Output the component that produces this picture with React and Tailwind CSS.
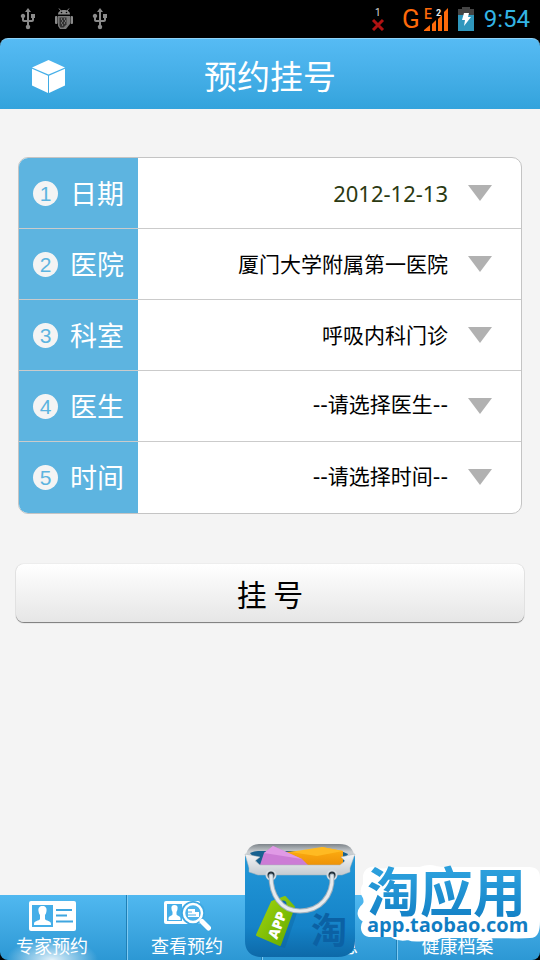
import React, { useState } from 'react';
import { MdUsb } from 'react-icons/md';

const fields = [
  {
    id: 'date',
    label: '日期',
    options: ['2012-12-13', '2012-12-14', '2012-12-15'],
    className: 'font-["Noto_Sans","Noto_Sans_CJK_SC",sans-serif] text-[22px] text-[#2b3a12]',
  },
  {
    id: 'hospital',
    label: '医院',
    options: ['厦门大学附属第一医院'],
    className: 'text-[21px] text-black',
  },
  {
    id: 'department',
    label: '科室',
    options: ['呼吸内科门诊'],
    className: 'text-[21px] text-black',
  },
  {
    id: 'doctor',
    label: '医生',
    options: ['--请选择医生--'],
    className: 'font-["DejaVu_Sans","Noto_Sans_CJK_SC",sans-serif] text-[21px] text-black',
  },
  {
    id: 'time',
    label: '时间',
    options: ['--请选择时间--'],
    className: 'font-["DejaVu_Sans","Noto_Sans_CJK_SC",sans-serif] text-[21px] text-black',
  },
];

function RobotIcon() {
  return (
    <svg width="20" height="22" viewBox="0 0 20 22" aria-hidden="true">
      <path d="M5 0.500L7 3M15 0.500L13 3" stroke="#8a8a8a" />
      <path d="M4 6.500C4 3.500 6.500 2 10 2s6 1.500 6 4.500z" fill="#8a8a8a" />
      <rect x="1" y="8" width="2.500" height="8" rx="1" fill="#8a8a8a" />
      <rect x="16.500" y="8" width="2.500" height="8" rx="1" fill="#8a8a8a" />
      <path d="M4 8h12v8l-4 5H6l-2-3z" fill="#777" />
      <path d="M5.500 9.500h7v7l-3 3h-3l-1-2z" fill="#333" />
      <path d="M7 11h1M10 11h1M8 13h1M11 13h1M7 15h1M10 15h1M8 17h1" stroke="#aaa" />
      <circle cx="7.500" cy="4.500" r="0.800" fill="#000" />
      <circle cx="12.500" cy="4.500" r="0.800" fill="#000" />
    </svg>
  );
}

function SignalIcon() {
  return (
    <svg width="25" height="24" viewBox="0 0 25 24" overflow="visible" aria-hidden="true">
      <path d="M0 24v-1l6-5v6zM8 24v-7l4-4v11zM14 24V12l4-4v16zM20 24V5l4-4v23z" fill="#ff6a0a" />
      <text x="0" y="12" fontSize="14" fontFamily="Roboto" fontWeight="500" fill="#ff6a0a">
        E
      </text>
      <text x="12" y="9" fontSize="9" fontFamily="Roboto" fontWeight="700" fill="#eee">
        2
      </text>
    </svg>
  );
}

function BatteryIcon() {
  return (
    <svg width="16" height="24" viewBox="0 0 16 24" aria-hidden="true">
      <path d="M4 0h8v2h4v6H0V2h4z" fill="#444" />
      <path d="M0 8h16v16H0z" fill="#2f97bd" />
      <path d="M6 6h5l-1 4h3l-7 9 1-6H4z" fill="#fff" />
    </svg>
  );
}

function StatusBar() {
  return (
    <div className="flex h-[38px] items-center justify-between bg-black pr-[10px] pl-4 font-[Roboto,sans-serif]">
      <div className="flex items-center gap-[14px] text-[#8a8a8a]">
        <MdUsb size={24} />
        <RobotIcon />
        <MdUsb size={24} />
      </div>
      <div className="flex items-center">
        <svg className="mr-[17px]" width="14" height="24" viewBox="0 0 14 24" aria-hidden="true">
          <text x="4" y="9" fontSize="10" fontFamily="Roboto" fill="#ddd">
            1
          </text>
          <path d="M2 13l10 10M12 13L2 23" stroke="#b01212" strokeWidth="3" />
        </svg>
        <span className="mr-1 text-[26px] leading-[38px] text-[#ff6a0a]">G</span>
        <SignalIcon />
        <span className="mr-[10px] ml-[9px]">
          <BatteryIcon />
        </span>
        <span className="text-2xl text-[#33b5e5]">9:54</span>
      </div>
    </div>
  );
}

function Header() {
  return (
    <header className="bg-black">
      <div className="grid h-[71px] grid-cols-[1fr_auto_1fr] items-center rounded-t-lg border-t border-[#8fd2f8] bg-linear-to-b from-[#56bbf4] to-[#33a3dc] px-8">
        <button type="button" aria-label="首页" className="w-[33px] pt-1">
          <svg width="33" height="33" viewBox="0 0 33 33">
            <path d="M16.500 0L33 7.500 16.500 14.500 0 7.500z" fill="#fff" />
            <path d="M0 8.700l16 7V33L0 25.500zM33 8.700l-16 7V33l16-7.500z" fill="#fff" />
          </svg>
        </button>
        <h1 className="pt-[2px] text-[33px] leading-[48px] text-white">预约挂号</h1>
      </div>
    </header>
  );
}

function FieldRow({ number, field, value, onChange }) {
  return (
    <div className="flex h-[71px] border-b border-[#cbcbcb] last:border-b-0">
      <label
        htmlFor={field.id}
        className="flex w-[119px] items-center gap-3 bg-[#5db4e0] pl-[14px] text-[27px] text-white"
      >
        <span className="flex size-[25px] shrink-0 items-center justify-center rounded-full bg-[#f4f4f4] font-['Liberation_Sans',sans-serif] text-[21px] leading-[25px] text-[#5db4e0]">
          {number}
        </span>
        {field.label}
      </label>
      <div className="relative flex-1">
        <select
          id={field.id}
          value={value}
          onChange={(e) => onChange(field.id, e.target.value)}
          className={`size-full appearance-none bg-transparent pr-[73px] [text-align-last:right] outline-none ${field.className}`}
        >
          {field.options.map((option) => (
            <option key={option}>{option}</option>
          ))}
        </select>
        <svg
          className="pointer-events-none absolute top-[27px] right-[29px]"
          width="24"
          height="16"
          viewBox="0 0 24 16"
          aria-hidden="true"
        >
          <path d="M0 0h24L12 16z" fill="#b1b1b1" />
        </svg>
      </div>
    </div>
  );
}

function CardIcon() {
  return (
    <svg width="47" height="30" viewBox="0 0 47 30" aria-hidden="true">
      <rect width="47" height="30" rx="2" fill="#fff" />
      <rect x="3" y="4" width="21" height="22" fill="#45aee8" />
      <path
        d="M13.500 5c3 0 4.500 2 4 5-.2 2-.8 3-1.500 4v4c1 2 6 1.500 6 5v1H5v-1c0-3.500 5-3 6-5v-4c-.7-1-1.300-2-1.500-4-.500-3 1-5 4-5z"
        fill="#fff"
      />
      <path d="M27 9h16M27 14.500h11M27 20.500h17" stroke="#3fa6e0" strokeWidth="2" />
    </svg>
  );
}

function SearchCardIcon() {
  return (
    <svg width="47" height="30" viewBox="0 0 47 30" aria-hidden="true">
      <rect width="36" height="23" rx="2" fill="#fff" />
      <rect x="3" y="3" width="15" height="17" fill="#45aee8" />
      <path
        d="M10.500 4c2.500 0 3.500 1.500 3 4-.2 1.500-.6 2-1 3v2.500c1 1.500 4 1.500 4 4V19h-12v-1.500c0-2.500 3-2.500 4-4V11c-.4-1-.8-1.500-1-3-.500-2.500.500-4 3-4z"
        fill="#fff"
      />
      <circle cx="29" cy="12" r="12" fill="#3ea8e2" />
      <circle cx="29" cy="12" r="9" fill="#4db3ea" stroke="#fff" strokeWidth="2.500" />
      <path d="M24 8h7v3h4v5H24z" fill="#fff" />
      <path d="M24 11h4M24 14h8" stroke="#45aee8" strokeWidth="1" />
      <path d="M38 20.500l6.500 6.500" stroke="#fff" strokeWidth="5" strokeLinecap="round" />
    </svg>
  );
}

const tabs = [
  { label: '专家预约', icon: <CardIcon /> },
  { label: '查看预约', icon: <SearchCardIcon /> },
  { label: '预约信息', icon: null },
  { label: '健康档案', icon: null },
];

function StoreLogo() {
  return (
    <svg
      className="pointer-events-none absolute right-0 bottom-0"
      width="300"
      height="122"
      viewBox="0 0 300 122"
      role="img"
      aria-label="淘应用 app.taobao.com"
    >
      <defs>
        <linearGradient id="bag" x1="0" y1="0" x2="0" y2="1">
          <stop offset="0" stopColor="#2398d8" />
          <stop offset="0.700" stopColor="#1583c8" />
          <stop offset="1" stopColor="#0d69a8" />
        </linearGradient>
        <linearGradient id="back" x1="0" y1="0" x2="0" y2="1">
          <stop offset="0" stopColor="#7d848a" />
          <stop offset="0.300" stopColor="#c9cdd0" />
          <stop offset="1" stopColor="#d5dade" />
        </linearGradient>
        <linearGradient id="rim" x1="0" y1="0" x2="0" y2="1">
          <stop offset="0" stopColor="#f4f5f6" />
          <stop offset="1" stopColor="#c4cbd1" />
        </linearGradient>
        <linearGradient id="tag" x1="0" y1="0" x2="1" y2="1">
          <stop offset="0" stopColor="#a5d70f" />
          <stop offset="1" stopColor="#5fa800" />
        </linearGradient>
        <linearGradient id="orange" x1="0" y1="0" x2="0" y2="1">
          <stop offset="0" stopColor="#ffb111" />
          <stop offset="1" stopColor="#ee9208" />
        </linearGradient>
        <linearGradient id="word" gradientUnits="userSpaceOnUse" x1="0" y1="34" x2="0" y2="98">
          <stop offset="0" stopColor="#2b9fdc" />
          <stop offset="1" stopColor="#0b76be" />
        </linearGradient>
      </defs>
      <path d="M5 20C7 10 11 6 21 6h78c10 0 14 4 16 14v12H5z" fill="url(#back)" />
      <path d="M10 15c2-1 5-2 8-2h83l7 3-6 12H20z" fill="#17618f" />
      <path d="M26 14l3-1h16l20 9h-7z" fill="#6d7a83" />
      <path d="M45 14l33-2 4-3 21 4v14H62z" fill="url(#orange)" />
      <path d="M50 14l32-5 21 4-26 5z" fill="#ffba22" />
      <path d="M20 27l4-12 9-7 29 13 6 6z" fill="#cc7cd5" />
      <path d="M24 15l9-7 29 13z" fill="#e09ae6" />
      <path d="M5 18h5l5 10h90l5-10h5v85c0 11-7 16-17 16H22c-10 0-17-5-17-16z" fill="url(#bag)" />
      <path
        d="M5 16l15 3-5 4 5 4h80l5-4-4-4 14-3-5 14v4l-8 3H18l-9-3v-4z"
        fill="url(#rim)"
        stroke="#aab4bb"
        strokeWidth="0.500"
      />
      <path d="M36 69l14-3 8 6-13 38-7-2z" fill="#0c5f99" opacity="0.350" />
      <circle cx="31" cy="37" r="5.500" fill="#d5dbe0" />
      <circle cx="31" cy="37" r="3.500" fill="#24313b" />
      <circle cx="92" cy="37" r="5.500" fill="#d5dbe0" />
      <circle cx="92" cy="37" r="3.500" fill="#24313b" />
      <path
        d="M32 64l13-5 9 10-14 38-23-10z"
        fill="url(#tag)"
        stroke="url(#tag)"
        strokeWidth="2"
        strokeLinejoin="round"
      />
      <circle cx="43" cy="66" r="3.500" fill="#0e6cae" />
      <path
        d="M31 38c0 18 9 35 29 35s33-15 32-35"
        fill="none"
        stroke="#9fb0bd"
        strokeWidth="5"
        strokeLinecap="round"
      />
      <path
        d="M31 38c0 18 9 35 29 35s33-15 32-35"
        fill="none"
        stroke="#e6eaed"
        strokeWidth="3"
        strokeLinecap="round"
      />
      <text
        transform="translate(37 102) rotate(-69)"
        fontSize="14"
        fontFamily="Open Sans"
        fontWeight="800"
        fill="#fff"
      >
        APP
      </text>
      <text x="71" y="106" fontSize="36" fontFamily="Noto Sans CJK SC" fontWeight="700" fill="#0b61a4">
        淘
      </text>
      <path
        d="M124 38c1-7 8-10 14-7 5 2 9-1 15-1h27c5-2 10-3 16-1 8 2 16 1 23 1h70c7 0 10 4 10 10v43c0 8-1 16-9 16-12 1-26 0-38 0-3 4-10 5-14 0h-37c-6 3-12 4-17 3-7 1-12 1-16-1-8 2-14-1-17-3h-22c-7-1-9-9-5-15-6-3-7-9-3-14 4-3 4-5 3-9-4-6-2-11 0-14z"
        fill="#fff"
        stroke="#fff"
        strokeWidth="2"
        strokeLinejoin="round"
      />
      <g fill="url(#word)">
        <text x="127" y="74" fontSize="53" fontFamily="Noto Sans CJK SC" fontWeight="700">
          淘应用
        </text>
        <text x="127" y="94" fontSize="20" fontFamily="Open Sans" fontWeight="700">
          app.taobao.com
        </text>
      </g>
    </svg>
  );
}

function TabBar() {
  return (
    <footer className="relative mt-auto bg-black">
      <nav className="grid h-[65px] grid-cols-4 overflow-hidden rounded-b-lg bg-linear-to-b from-[#50b8f0] to-[#2c98d4]">
        {tabs.map((tab, i) => (
          <div
            key={tab.label}
            className={
              i === 0
                ? 'bg-[radial-gradient(ellipse_46px_22px_at_52px_100%,#ffffffdd,#ffffff00)] pr-2'
                : 'pr-2'
            }
          >
            <a
              href="#"
              className={`flex h-full flex-col items-center pt-[6px] pr-[22px] text-white ${
                i < 3 ? 'border-r border-[#1f7fb5] shadow-[1px_0_#7fcbf3]' : ''
              }`}
            >
              <span className="h-8">{tab.icon}</span>
              <span className="text-lg leading-6 whitespace-nowrap">{tab.label}</span>
            </a>
          </div>
        ))}
      </nav>
      <StoreLogo />
    </footer>
  );
}

function App() {
  const [values, setValues] = useState({});

  const handleChange = (id, value) => {
    setValues({ ...values, [id]: value });
  };

  return (
    <div className="flex min-h-screen flex-col bg-[#f4f4f4] font-['Noto_Sans_CJK_SC',sans-serif]">
      <StatusBar />
      <Header />
      <form className="pt-12 pb-32" onSubmit={(e) => e.preventDefault()}>
        <div className="mx-[18px] overflow-hidden rounded-[10px] border border-[#c4c4c4] bg-white">
          {fields.map((field, i) => (
            <FieldRow
              key={field.id}
              number={i + 1}
              field={field}
              value={values[field.id] ?? field.options[0]}
              onChange={handleChange}
            />
          ))}
        </div>
        <div className="mt-[50px] px-4">
          <button
            type="submit"
            className="h-[58px] w-full rounded-lg bg-linear-to-b from-white to-[#e6e6e6] text-[30px] leading-[58px] text-black shadow-[0_1px_1px_#777,0_0_1px_#aaa]"
          >
            挂 号
          </button>
        </div>
      </form>
      <TabBar />
    </div>
  );
}

export default App;
